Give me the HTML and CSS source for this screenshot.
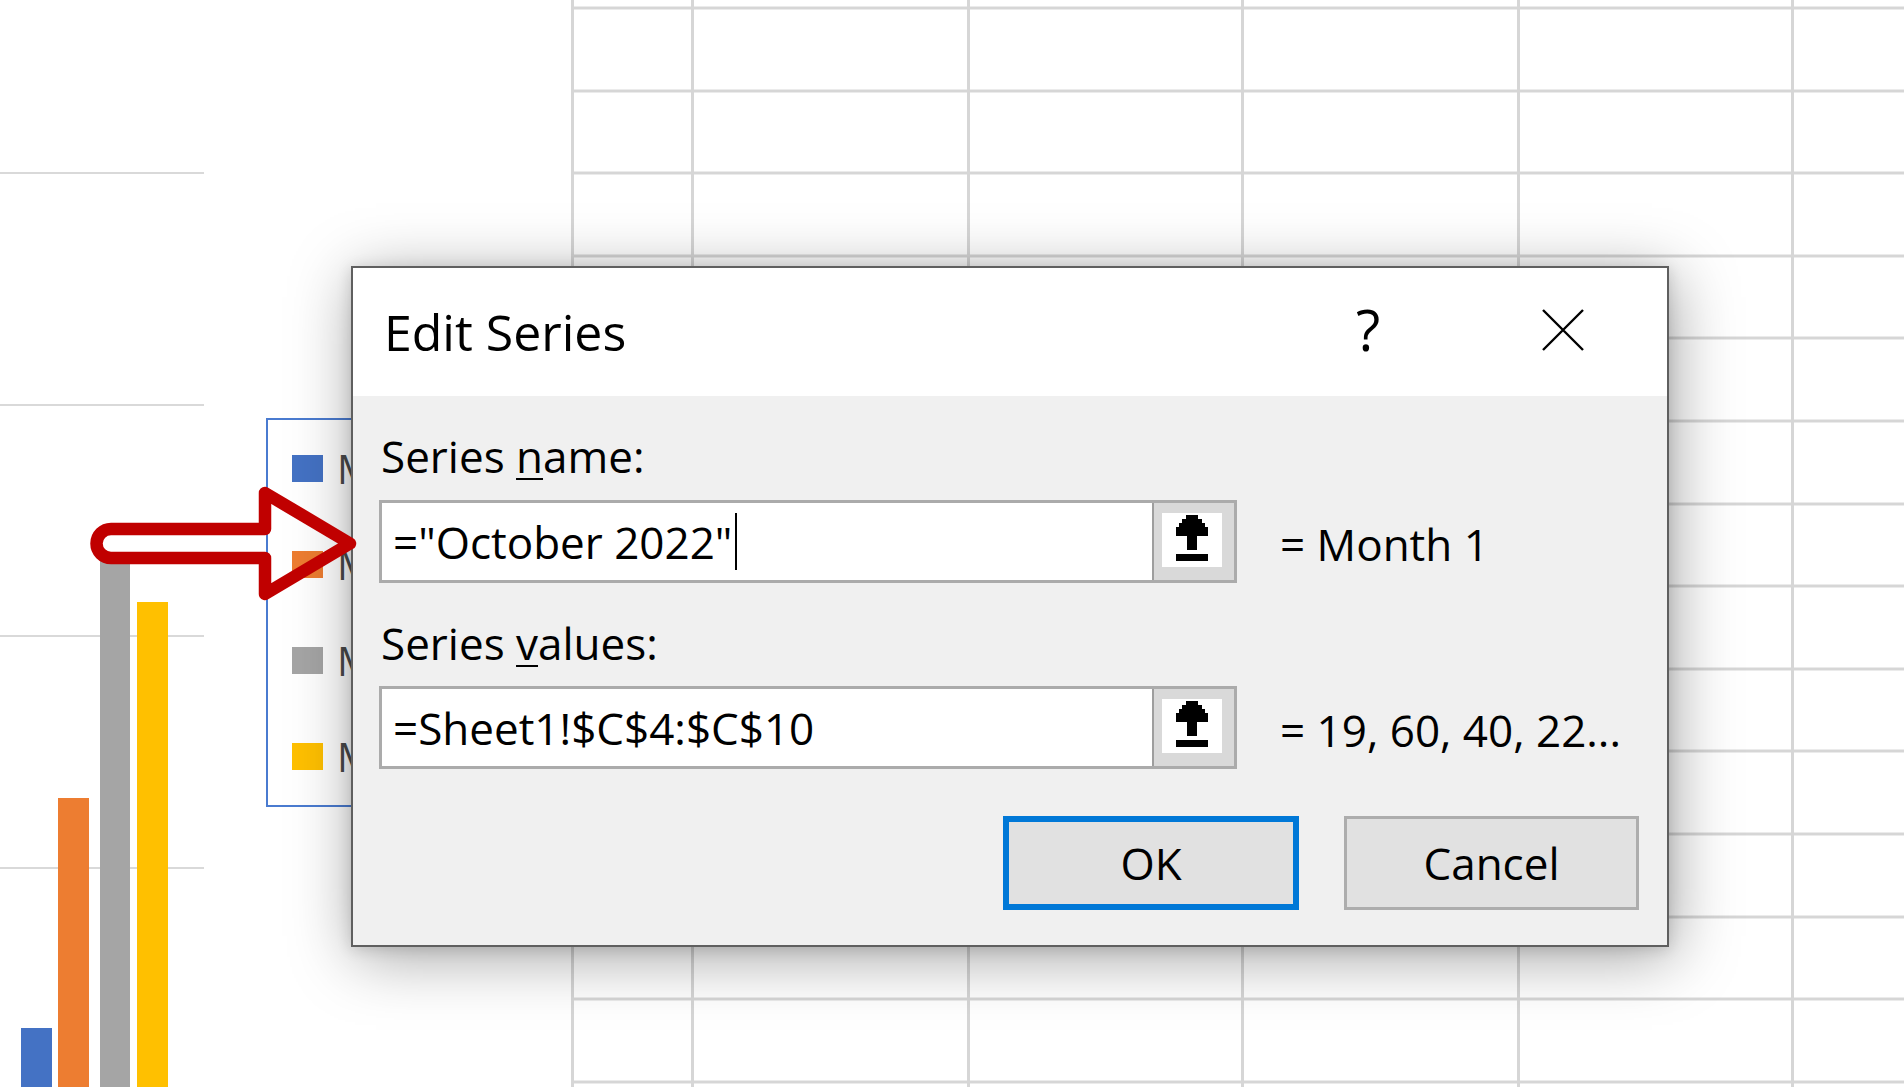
FILE: index.html
```html
<!DOCTYPE html>
<html lang="en">
<head>
<meta charset="utf-8">
<title>Edit Series</title>
<link rel="stylesheet" href="styles.css">
</head>
<body>
<div class="screen">
  <div class="chart">
    <div class="chart-lines">
      <div class="chart-line"></div>
      <div class="chart-line"></div>
      <div class="chart-line"></div>
      <div class="chart-line"></div>
    </div>
    <div class="bars">
      <div class="bar bar-blue" style="height:59px"></div>
      <div class="bar bar-orange" style="height:289px"></div>
      <div class="bar bar-gray" style="height:527px"></div>
      <div class="bar bar-yellow" style="height:485px"></div>
    </div>
    <div class="legend">
      <div class="legend-item"><span class="swatch sw-blue"></span><span class="legend-text">Month 1</span></div>
      <div class="legend-item"><span class="swatch sw-orange"></span><span class="legend-text">Month 2</span></div>
      <div class="legend-item"><span class="swatch sw-gray"></span><span class="legend-text">Month 3</span></div>
      <div class="legend-item"><span class="swatch sw-yellow"></span><span class="legend-text">Month 4</span></div>
    </div>
  </div>
  <div class="sheet">
    <div class="col col-a"></div>
    <div class="col col-b"></div>
    <div class="col col-c"></div>
    <div class="col col-d"></div>
    <div class="col col-e"></div>
    <div class="col col-f"></div>
  </div>

  <div class="dialog">
    <div class="titlebar">
      <div class="title">Edit Series</div>
      <div class="help">?</div>
      <div class="close">
        <svg width="42" height="42" viewBox="0 0 42 42"><path d="M1 1 L41 41 M41 1 L1 41" stroke="#000" stroke-width="2.4" fill="none"/></svg>
      </div>
    </div>
    <div class="body">
      <div class="label">Series <u>n</u>ame:</div>
      <div class="row">
        <div class="field">
          <div class="field-text">="October 2022"<span class="caret"></span></div>
          <div class="pick"><div class="pick-inner">
            <svg width="32" height="46" viewBox="0 0 32 46"><path d="M10 0 H22 V4 H26 V8 H29 V12 H32 V21 H21 V35 H11 V21 H0 V12 H3 V8 H6 V4 H10 Z" fill="#000"/><rect x="0" y="39" width="32" height="7" fill="#000"/></svg>
          </div></div>
        </div>
        <div class="value">= Month 1</div>
      </div>
      <div class="label label-second">Series <u>v</u>alues:</div>
      <div class="row row-second">
        <div class="field">
          <div class="field-text">=Sheet1!$C$4:$C$10</div>
          <div class="pick"><div class="pick-inner">
            <svg width="32" height="46" viewBox="0 0 32 46"><path d="M10 0 H22 V4 H26 V8 H29 V12 H32 V21 H21 V35 H11 V21 H0 V12 H3 V8 H6 V4 H10 Z" fill="#000"/><rect x="0" y="39" width="32" height="7" fill="#000"/></svg>
          </div></div>
        </div>
        <div class="value">= 19, 60, 40, 22...</div>
      </div>
      <div class="buttons">
        <div class="btn btn-default">OK</div>
        <div class="btn">Cancel</div>
      </div>
    </div>
  </div>

  <svg class="callout" width="1904" height="1087" viewBox="0 0 1904 1087">
    <path d="M265 529 L265 493 L350 543.5 L265 594 L265 558 L111 558 A14.5 14.5 0 0 1 111 529 Z" fill="none" stroke="#c00000" stroke-width="12.5" stroke-linejoin="round"/>
  </svg>
</div>
</body>
</html>
```

FILE: styles.css
```css
* { box-sizing: border-box; }

body {
  margin: 0;
  width: 1904px;
  height: 1087px;
  overflow: hidden;
  background: #ffffff;
  font-family: "Open Sans", "Noto Sans", "Liberation Sans", sans-serif;
  color: #000;
}

.screen {
  position: relative;
  display: flex;
  width: 1904px;
  height: 1087px;
}

/* ---------- chart ---------- */
.chart {
  position: relative;
  flex: none;
  width: 571px;
  height: 1087px;
  background: #fff;
}

.chart-lines {
  display: flex;
  flex-direction: column;
  gap: 229.5px;
  padding-top: 172px;
  width: 204px;
}

.chart-line {
  height: 2px;
  background: #d9d9d9;
}

.bars {
  position: absolute;
  left: 21px;
  bottom: 0;
  display: flex;
  align-items: flex-end;
}

.bar { width: 31px; }
.bar-blue { background: #4472c4; }
.bar-orange { background: #ed7d31; margin-left: 6px; }
.bar-gray { background: #a5a5a5; margin-left: 11px; width: 30px; }
.bar-yellow { background: #ffc000; margin-left: 7px; }

/* legend: its right part lies under the dialog, so it is clipped at the dialog edge */
.legend {
  position: absolute;
  left: 266px;
  top: 418px;
  width: 86px;
  height: 389px;
  border: 2px solid #4a7bd0;
  border-right: none;
  overflow: hidden;
  display: flex;
  flex-direction: column;
  padding-left: 24px;
}

.legend-item {
  height: 96px;
  flex: none;
  display: flex;
  align-items: center;
  gap: 14px;
}

.swatch {
  width: 31px;
  height: 27px;
  flex: none;
}
.sw-blue { background: #4472c4; }
.sw-orange { background: #ed7d31; }
.sw-gray { background: #a5a5a5; }
.sw-yellow { background: #ffc000; }

.legend-text {
  font-size: 40px;
  color: #4a4a4a;
  white-space: nowrap;
}

/* ---------- spreadsheet grid ---------- */
.sheet {
  flex: 1;
  display: flex;
  height: 1087px;
}

.col {
  height: 1087px;
  border-left: 3px solid #d6d6d6;
  background-image: repeating-linear-gradient(to bottom, #d6d6d6 0, #d6d6d6 3px, transparent 3px, transparent 82.6px);
  background-position: 0 6.5px;
}
.col-a { width: 120px; }
.col-b { width: 276px; }
.col-c { width: 274px; }
.col-d { width: 276px; }
.col-e { width: 274px; }
.col-f { flex: 1; }

/* ---------- dialog ---------- */
.dialog {
  position: absolute;
  left: 351px;
  top: 266px;
  width: 1318px;
  height: 681px;
  border: 2px solid #5f5f5f;
  background: #f0f0f0;
  box-shadow: 4px 10px 60px rgba(0, 0, 0, 0.36), 0 2px 14px rgba(0, 0, 0, 0.14);
  display: flex;
  flex-direction: column;
}

.titlebar {
  height: 128px;
  flex: none;
  background: #ffffff;
  display: flex;
  align-items: center;
  padding-left: 31px;
  padding-right: 83px;
}

.title {
  flex: 1;
  font-size: 50px;
  line-height: 68px;
}

.help {
  width: 60px;
  text-align: center;
  font-size: 56px;
  line-height: 68px;
  margin-top: -6px;
}

.close {
  width: 42px;
  height: 42px;
  margin-left: 144px;
  margin-top: -4px;
}

.close svg { display: block; }

.body {
  flex: 1;
  padding: 30px 28px 35px 26px;
  display: flex;
  flex-direction: column;
  font-size: 44px;
}

.label {
  height: 60px;
  line-height: 60px;
  padding-left: 2px;
}

.label u {
  text-decoration-thickness: 2px;
  text-underline-offset: 5px;
}

.label-second { margin-top: 30px; }

.row {
  display: flex;
  align-items: center;
  margin-top: 14px;
}

.row-second { margin-top: 13px; }

.field {
  width: 858px;
  height: 83px;
  flex: none;
  border: 3px solid #ababab;
  background: #ffffff;
  display: flex;
}

.field-text {
  flex: 1;
  display: flex;
  align-items: center;
  padding-left: 11px;
  line-height: 60px;
  white-space: nowrap;
}

.caret {
  display: inline-block;
  width: 2px;
  height: 57px;
  background: #000;
  margin-left: 3px;
}

.pick {
  width: 82px;
  flex: none;
  border-left: 2px solid #9e9e9e;
  background: #d9d9d9;
  padding: 10px 12px 13px 8px;
}

.pick-inner {
  width: 60px;
  height: 54px;
  background: #ffffff;
  display: flex;
  justify-content: center;
  align-items: flex-start;
  padding-top: 2px;
}

.pick-inner svg { display: block; }

.value {
  margin-left: 43px;
  margin-top: 4px;
  line-height: 60px;
  white-space: nowrap;
}

.buttons {
  margin-top: 47px;
  display: flex;
  justify-content: flex-end;
  gap: 45px;
}

.btn {
  width: 295px;
  height: 94px;
  background: #e1e1e1;
  border: 3px solid #adadad;
  display: flex;
  align-items: center;
  justify-content: center;
  line-height: 60px;
}

.btn-default {
  width: 296px;
  border: 6px solid #0078d7;
}

/* ---------- red callout arrow ---------- */
.callout {
  position: absolute;
  left: 0;
  top: 0;
  pointer-events: none;
}
```
